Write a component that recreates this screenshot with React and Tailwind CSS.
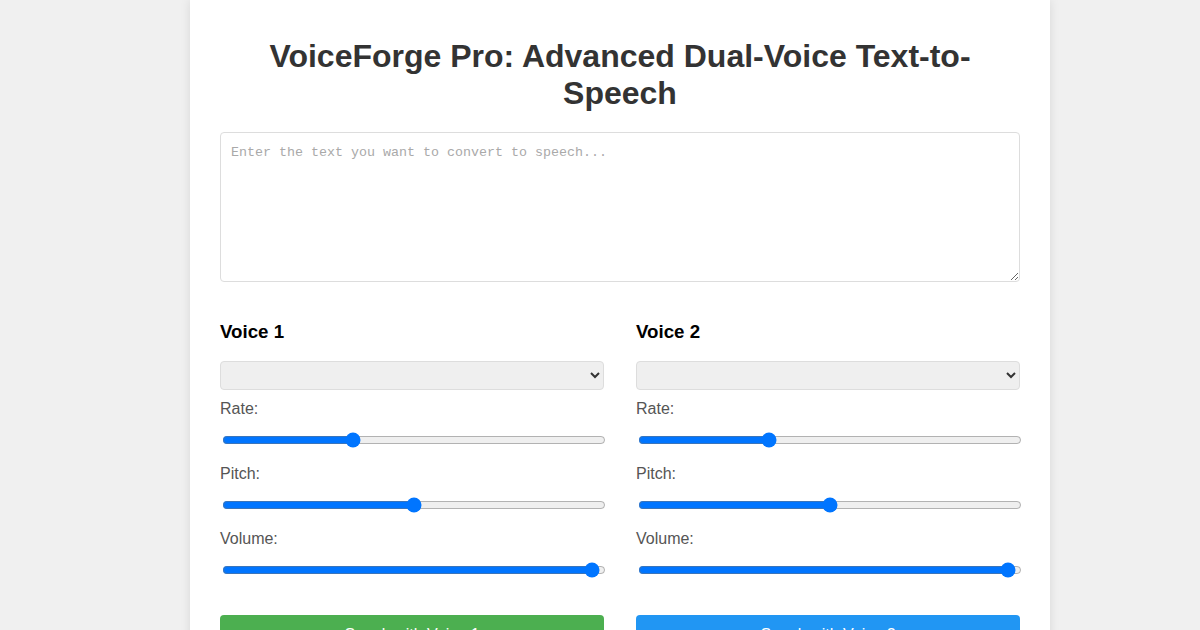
import React, { useState } from 'react';

function VoicePanel({ title, buttonClass, buttonText }) {
  const [rate, setRate] = useState(1);
  const [pitch, setPitch] = useState(1);
  const [volume, setVolume] = useState(0.984);

  return (
    <div className="flex-1 flex flex-col">
      <h3 className="text-[18.72px] font-bold text-black leading-[22px] mt-[1px] mb-[18px]">{title}</h3>
      <select className="w-full h-[29px] px-[5px] bg-[#efefef] border border-[#ddd] rounded-[4px] text-[13px]">
        <option value=""></option>
      </select>

      <label className="block mt-[10px] text-[16px] leading-[18px] text-[#555]">Rate:</label>
      <input
        type="range"
        min="0.5"
        max="2"
        step="0.1"
        value={rate}
        onChange={(e) => setRate(e.target.value)}
        className="block w-full ml-[2px] mt-[14px] mb-[17px]"
      />

      <label className="block text-[16px] leading-[18px] text-[#555]">Pitch:</label>
      <input
        type="range"
        min="0"
        max="2"
        step="0.1"
        value={pitch}
        onChange={(e) => setPitch(e.target.value)}
        className="block w-full ml-[2px] mt-[14px] mb-[17px]"
      />

      <label className="block text-[16px] leading-[18px] text-[#555]">Volume:</label>
      <input
        type="range"
        min="0"
        max="1"
        step="0.001"
        value={volume}
        onChange={(e) => setVolume(e.target.value)}
        className="block w-full ml-[2px] mt-[14px]"
      />

      <button className={`mt-[37px] w-full pt-[8px] pb-[10px] rounded-[4px] text-white text-[16px] ${buttonClass}`}>
        {buttonText}
      </button>
    </div>
  );
}

function App() {
  const [text, setText] = useState('');

  return (
    <div className="min-h-screen bg-[#f0f0f0] flex justify-center pl-[40px] font-['Liberation_Sans',Arial,sans-serif] text-[#333]">
      <div className="w-[860px] bg-white shadow-[0_0_10px_rgba(0,0,0,0.1)] px-[30px] pt-[38px] pb-[30px]">
        <h1 className="text-[32px] font-bold text-center leading-[37px] text-[#333]">
          VoiceForge Pro: Advanced Dual-Voice Text-to-Speech
        </h1>
        <textarea
          value={text}
          onChange={(e) => setText(e.target.value)}
          placeholder="Enter the text you want to convert to speech..."
          className="block mt-[20px] w-full h-[150px] p-[10px] border border-[#ddd] rounded-[4px] font-['Liberation_Mono',monospace] text-[13.333px] placeholder:text-[#a9a9a9]"
        />
        <div className="flex gap-[32px] mt-[38px]">
          <VoicePanel title="Voice 1" buttonClass="bg-[#4caf50]" buttonText="Speak with Voice 1" />
          <VoicePanel title="Voice 2" buttonClass="bg-[#2196f3]" buttonText="Speak with Voice 2" />
        </div>
      </div>
    </div>
  );
}

export default App;
